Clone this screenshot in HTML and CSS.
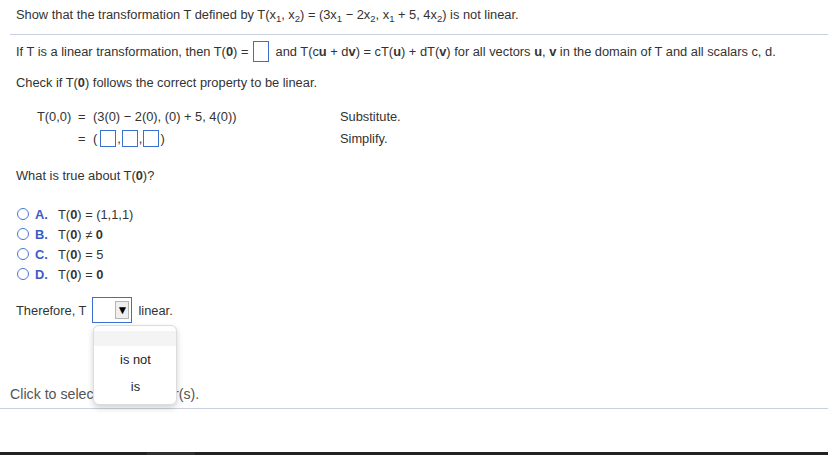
FILE: index.html
```html
<!DOCTYPE html>
<html>
<head>
<meta charset="utf-8">
<link rel="stylesheet" href="styles.css">
</head>
<body>
<div class="page">
  <div class="question">Show that the transformation T defined by T(x<sub>1</sub>, x<sub>2</sub>) = (3x<sub>1</sub> &minus; 2x<sub>2</sub>, x<sub>1</sub> + 5, 4x<sub>2</sub>) is not linear.</div>
  <div class="work">
    <p class="line first">If T is a linear transformation, then T(<b>0</b>) = <span class="box tall"></span> and T(c<b>u</b> + d<b>v</b>) = cT(<b>u</b>) + dT(<b>v</b>) for all vectors <b>u</b>, <b>v</b> in the domain of T and all scalars c, d.</p>
    <p class="line check">Check if T(<b>0</b>) follows the correct property to be linear.</p>
    <div class="eq">
      <span class="lhs">T(0,0)</span><span class="eqs">=</span><span class="rhs">(3(0) &minus; 2(0), (0) + 5, 4(0))</span><span class="note">Substitute.</span>
      <span class="lhs"></span><span class="eqs">=</span><span class="rhs">(<span class="box"></span>,<span class="box"></span>,<span class="box"></span>)</span><span class="note">Simplify.</span>
    </div>
    <p class="line what">What is true about T(<b>0</b>)?</p>
    <ul class="options">
      <li><span class="radio"></span><span class="letter">A.</span><span>T(<b>0</b>) = (1,1,1)</span></li>
      <li><span class="radio"></span><span class="letter">B.</span><span>T(<b>0</b>) &ne; <b>0</b></span></li>
      <li><span class="radio"></span><span class="letter">C.</span><span>T(<b>0</b>) = 5</span></li>
      <li><span class="radio"></span><span class="letter">D.</span><span>T(<b>0</b>) = <b>0</b></span></li>
    </ul>
    <div class="therefore">
      <span>Therefore, T</span>
      <span class="select">
        <span class="arrow">&#9660;</span>
        <span class="menu">
          <span class="menu-blank"></span>
          <span class="menu-item">is not</span>
          <span class="menu-item">is</span>
        </span>
      </span>
      <span>linear.</span>
    </div>
  </div>
  <div class="footer">Click to select your answer(s).</div>
  <div class="bar"><span class="bar-seg"></span></div>
</div>
</body>
</html>
```
FILE: styles.css
```css
html, body {
  margin: 0;
  padding: 0;
  background: #fff;
}
body {
  font-family: "Liberation Sans", Arial, sans-serif;
  font-size: 12.85px;
  color: #333;
}
.page {
  position: relative;
  height: 455px;
  display: flex;
  flex-direction: column;
}
b { font-weight: bold; }
sub {
  font-size: 9.5px;
  vertical-align: -3px;
  line-height: 0;
}
.question {
  margin-left: 10px;
  padding: 8px 6px 12px;
  line-height: 14px;
  border-bottom: 1px solid #c9d1e0;
}
.work {
  padding-left: 16px;
}
.line {
  margin: 0;
  line-height: 18px;
}
.line.first {
  margin-top: 6px;
  line-height: 21px;
  display: flex;
  align-items: center;
  white-space: pre;
}
.box {
  display: inline-block;
  width: 14px;
  height: 15px;
  border: 1px solid #3a6fd0;
  background: #fff;
  vertical-align: middle;
  margin: 0 1px;
}
.box.tall {
  height: 19px;
  margin: 0 3px 0 1px;
}
.line.check { margin-top: 12px; }
.eq {
  margin-top: 13px;
  padding-left: 21px;
  display: grid;
  grid-template-columns: 41px 15px 247px auto;
  grid-auto-rows: 22px;
  align-items: center;
}
.eq .rhs {
  display: flex;
  align-items: center;
  white-space: pre;
}
.eq .rhs .box:first-child { margin-left: 3px; }
.line.what { margin-top: 18px; }
.options {
  list-style: none;
  margin: 19px 0 0;
  padding: 0;
}
.options li {
  display: flex;
  align-items: center;
  height: 20px;
}
.radio {
  width: 10px;
  height: 10px;
  border: 1.5px solid #4a78d6;
  border-radius: 50%;
  margin-left: 1px;
  margin-right: 6px;
}
.letter {
  width: 23px;
  color: #3a5bc4;
  font-weight: bold;
}
.therefore {
  margin-top: 13px;
  height: 26px;
  display: flex;
  align-items: center;
}
.select {
  position: relative;
  width: 38px;
  height: 24px;
  border: 1px solid #3a6fd0;
  margin: 0 6px 0 6px;
  display: flex;
  align-items: center;
  justify-content: flex-end;
}
.arrow {
  width: 12px;
  height: 16px;
  margin-right: 2px;
  background: #efefef;
  border: 1px solid #b5b5b5;
  font-size: 12px;
  line-height: 16px;
  text-align: center;
  color: #000;
}
.menu {
  position: absolute;
  left: 0;
  top: 27px;
  width: 82px;
  height: 78px;
  border: 1px solid #dcdcdc;
  border-radius: 6px;
  background: #fff;
  box-shadow: 0 3px 6px rgba(0, 0, 0, 0.18);
  display: flex;
  flex-direction: column;
  z-index: 2;
}
.menu-blank {
  margin-top: 5px;
  height: 15px;
  background: #f4f4f4;
}
.menu-item {
  height: 27px;
  line-height: 27px;
  text-align: center;
  color: #222;
}
.footer {
  margin-top: 62px;
  padding: 0 10px 5px;
  line-height: 18px;
  font-size: 14.2px;
  color: #555;
  border-bottom: 1px solid #c9d1e0;
}
.bar {
  margin-top: auto;
  height: 3px;
  background: #222;
  display: flex;
}
.bar-seg {
  margin-left: 147px;
  width: 48px;
  background: #2f2f2f;
}
```
